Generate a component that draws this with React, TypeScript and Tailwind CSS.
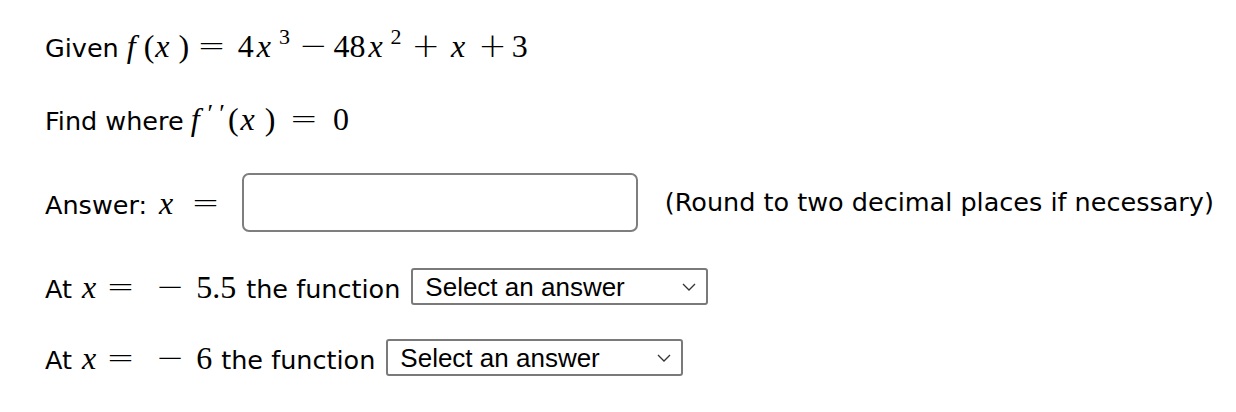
import React from "react";

const textFont = "font-['DejaVu_Sans',sans-serif] text-[25.5px] text-black";

// math is drawn in a serif face with the operators taken from a sans face,
// roughly the way the MathJax output is spaced
function M({ children, className = "" }: { children: React.ReactNode; className?: string }) {
  return <span className={`font-['Liberation_Serif',serif] text-[32px] whitespace-nowrap ${className}`}>{children}</span>;
}

function V({ children, className = "" }: { children: React.ReactNode; className?: string }) {
  return <i className={`italic ${className}`}>{children}</i>;
}

function Op({ children, className = "" }: { children: React.ReactNode; className?: string }) {
  return (
    <span className={`font-['DejaVu_Sans',sans-serif] font-light text-[34px] leading-none ${className}`}>{children}</span>
  );
}

function Sup({ children, className = "" }: { children: React.ReactNode; className?: string }) {
  return <span className={`relative -top-[13px] text-[22px] ${className}`}>{children}</span>;
}

function SelectBox() {
  return (
    <div className="relative ml-[11px]">
      <select
        defaultValue=""
        className="appearance-none w-[297px] h-[37px] border-2 border-[#7a7a7a] rounded-[3px] bg-white pl-[12px] font-['Liberation_Sans',Arial,sans-serif] text-[26px] text-black leading-none"
      >
        <option value="">Select an answer</option>
        <option value="up">is concave up</option>
        <option value="down">is concave down</option>
      </select>
      <svg width="14" height="9" viewBox="0 0 14 9" className="absolute right-[12px] top-1/2 -translate-y-1/2 pointer-events-none">
        <path d="M1 1.5 L7 7.5 L13 1.5" fill="none" stroke="#333" strokeWidth="1.3" />
      </svg>
    </div>
  );
}

export default function App() {
  return (
    <div className={`min-h-screen bg-white pl-[45px] pt-[26px] ${textFont}`}>
      <div className="flex items-center h-[40px]">
        <span className="whitespace-nowrap">
          Given
          <M className="ml-[8px]">
            <V>f</V>
            <span className="ml-[8px]">(</span>
            <V className="ml-[1px]">x</V>
            <span className="ml-[9px]">)</span>
            <Op className="ml-[8px]">=</Op>
            <span className="ml-[12px]">4</span>
            <V className="ml-[3px]">x</V>
            <Sup className="ml-[8px]">3</Sup>
            <Op className="ml-[9px]">−</Op>
            <span className="ml-[6px]">48</span>
            <V className="ml-[3px]">x</V>
            <Sup className="ml-[8px]">2</Sup>
            <Op className="ml-[10px]">+</Op>
            <V className="ml-[11px]">x</V>
            <Op className="ml-[13px]">+</Op>
            <span className="ml-[5px]">3</span>
          </M>
        </span>
      </div>

      <div className="flex items-center h-[40px] mt-[33px]">
        <span className="whitespace-nowrap">
          Find where
          <M className="ml-[7px]">
            <V>f</V>
            <span className="ml-[8px] text-[26px] relative -top-[8px]">′</span>
            <span className="ml-[6px] text-[26px] relative -top-[8px]">′</span>
            <span className="ml-[3px]">(</span>
            <V className="ml-[2px]">x</V>
            <span className="ml-[10px]">)</span>
            <Op className="ml-[14px]">=</Op>
            <span className="ml-[15px]">0</span>
          </M>
        </span>
      </div>

      <div className="flex items-center h-[59px] mt-[34px]">
        <span className="whitespace-nowrap">
          Answer:
          <M className="ml-[12px]">
            <V>x</V>
            <Op className="ml-[18px]">=</Op>
          </M>
        </span>
        <input
          type="text"
          className="ml-[22px] w-[396px] h-[59px] border-2 border-[#7e7e7e] rounded-[7px] bg-white outline-none"
        />
        <span className="ml-[27px] whitespace-nowrap">(Round to two decimal places if necessary)</span>
      </div>

      <div className="flex items-center h-[38px] mt-[36px]">
        <span className="whitespace-nowrap">
          At
          <M className="ml-[10px]">
            <V>x</V>
            <Op className="ml-[10px]">=</Op>
            <Op className="ml-[21px]">−</Op>
            <span className="ml-[12px]">5.5</span>
          </M>
          <span className="ml-[10px]">the function</span>
        </span>
        <SelectBox />
      </div>

      <div className="flex items-center h-[38px] mt-[33px]">
        <span className="whitespace-nowrap">
          At
          <M className="ml-[10px]">
            <V>x</V>
            <Op className="ml-[10px]">=</Op>
            <Op className="ml-[21px]">−</Op>
            <span className="ml-[12px]">6</span>
          </M>
          <span className="ml-[9px]">the function</span>
        </span>
        <SelectBox />
      </div>
    </div>
  );
}
